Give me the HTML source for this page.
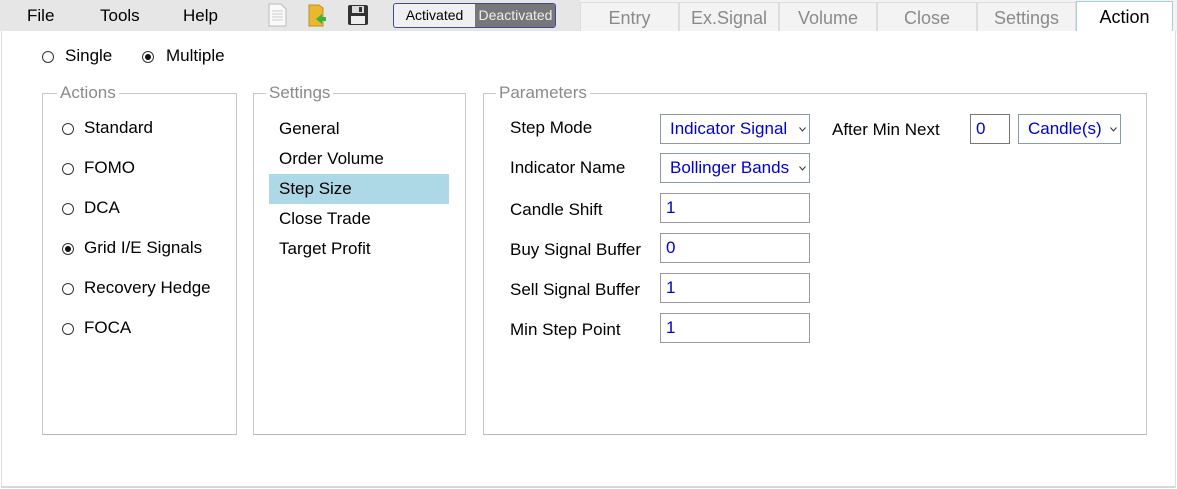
<!DOCTYPE html>
<html><head><style>
*{margin:0;padding:0;box-sizing:border-box}
body{width:1177px;height:489px;position:relative;background:#fff;font-family:"Liberation Sans",sans-serif;font-size:17px;color:#000;overflow:hidden}
.a{position:absolute;white-space:nowrap}
.fs{position:absolute;border:1px solid #c8c8c8;border-bottom-color:#b8b8b8}
.lg{position:absolute;background:#fff;color:#8a8a8a;padding:0 3px;top:-11px;line-height:20px}
.rb{position:absolute;width:12px;height:12px;border:1px solid #333;border-radius:50%}
.rb.on::after{content:"";position:absolute;left:2px;top:2px;width:6px;height:6px;border-radius:50%;background:#111}
.inp{position:absolute;border:1px solid #8a9aa8;height:30px;color:#0000d0;padding-left:9px;line-height:28px;overflow:hidden;white-space:nowrap}
.cb{padding-right:12px}
.cb span.t{display:block;overflow:hidden}
.tb{border-color:#9a9a9a;padding-left:5px}
.arr{position:absolute;right:3px;top:12px}
.tab{position:absolute;top:2px;height:30px;border:1px solid #ddd;border-bottom:none;background:#f3f3f3;color:#8a8a8a;text-align:center;line-height:30px;font-size:18px}
</style></head><body>
<div class="a" style="left:0;top:0;width:1177px;height:31px;background:#e6e6e6"></div>
<div class="a" style="left:27px;top:6px;font-size:17px">File</div>
<div class="a" style="left:100px;top:6px">Tools</div>
<div class="a" style="left:183px;top:6px">Help</div>
<svg class="a" style="left:266px;top:3px" width="22" height="24"><path d="M3 1h12l5 5v17H3z" fill="#fafafa" stroke="#bbb"/><path d="M6 8h11M6 11h11M6 14h11M6 17h11" stroke="#ccc"/></svg>
<svg class="a" style="left:307px;top:3px" width="22" height="24"><path d="M2 2h10l4 3v18H2z" fill="#e8b830" stroke="#c09020"/><path d="M9 16l6-5v3h4v4h-4v3z" fill="#3cb43c"/></svg>
<svg class="a" style="left:347px;top:4px" width="22" height="22"><rect x="1" y="1" width="20" height="20" rx="2" fill="#333"/><rect x="5" y="2" width="12" height="7" fill="#ddd"/><rect x="12" y="3" width="3" height="5" fill="#333"/><rect x="4" y="12" width="14" height="8" fill="#eee"/></svg>
<div class="a" style="left:393px;top:3px;width:163px;height:25px;border:1px solid #3c4c9c;border-radius:3px;overflow:hidden;background:#f0f0f0">
<div class="a" style="left:0;top:0;width:81px;height:23px;line-height:22px;text-align:center;font-size:14px">Activated</div>
<div class="a" style="left:81px;top:0;width:81px;height:23px;line-height:22px;text-align:center;font-size:14px;background:#777;color:#eee">Deactivated</div></div>
<div class="a" style="left:580px;top:0;width:597px;height:33px;background:#f3f3f3"></div>
<div class="tab" style="left:580px;width:99px">Entry</div>
<div class="tab" style="left:679px;width:100px">Ex.Signal</div>
<div class="tab" style="left:779px;width:98px">Volume</div>
<div class="tab" style="left:877px;width:100px">Close</div>
<div class="tab" style="left:977px;width:99px">Settings</div>
<div class="tab" style="left:1076px;top:1px;width:97px;height:32px;background:#fff;color:#000;border-color:#a8cce0">Action</div>
<div class="a" style="left:1px;top:31px;width:1175px;height:457px;border:1px solid #ddd;border-top:none;border-bottom:2px solid #d8d8d8;background:#fff"></div>
<div class="a" style="left:1076px;top:31px;width:97px;height:3px;background:#fff"></div>

<div class="rb" style="left:42px;top:51px"></div><div class="a" style="left:65px;top:46px">Single</div>
<div class="rb on" style="left:142px;top:51px"></div><div class="a" style="left:166px;top:46px">Multiple</div>

<div class="fs" style="left:42px;top:93px;width:195px;height:342px"><div class="lg" style="left:14px">Actions</div></div>
<div class="rb" style="left:62px;top:123px"></div><div class="a" style="left:84px;top:118px">Standard</div>
<div class="rb" style="left:62px;top:163px"></div><div class="a" style="left:84px;top:158px">FOMO</div>
<div class="rb" style="left:62px;top:203px"></div><div class="a" style="left:84px;top:198px">DCA</div>
<div class="rb on" style="left:62px;top:243px"></div><div class="a" style="left:84px;top:238px">Grid I/E Signals</div>
<div class="rb" style="left:62px;top:283px"></div><div class="a" style="left:84px;top:278px">Recovery Hedge</div>
<div class="rb" style="left:62px;top:323px"></div><div class="a" style="left:84px;top:318px">FOCA</div>

<div class="fs" style="left:253px;top:93px;width:213px;height:342px"><div class="lg" style="left:12px">Settings</div></div>
<div class="a" style="left:279px;top:119px">General</div>
<div class="a" style="left:279px;top:149px">Order Volume</div>
<div class="a" style="left:269px;top:174px;width:180px;height:30px;background:#add8e6"></div>
<div class="a" style="left:279px;top:179px">Step Size</div>
<div class="a" style="left:279px;top:209px">Close Trade</div>
<div class="a" style="left:279px;top:239px">Target Profit</div>

<div class="fs" style="left:483px;top:93px;width:664px;height:342px"><div class="lg" style="left:12px">Parameters</div></div>
<div class="a" style="left:510px;top:118px">Step Mode</div>
<div class="a" style="left:510px;top:158px">Indicator Name</div>
<div class="a" style="left:510px;top:200px">Candle Shift</div>
<div class="a" style="left:510px;top:240px">Buy Signal Buffer</div>
<div class="a" style="left:510px;top:280px">Sell Signal Buffer</div>
<div class="a" style="left:510px;top:320px">Min Step Point</div>
<div class="inp cb" style="left:660px;top:114px;width:150px"><span class="t">Indicator Signal</span><svg class="arr" width="7" height="5"><path d="M0.5 0.5L3.5 4L6.5 0.5" fill="none" stroke="#333"/></svg></div>
<div class="inp cb" style="left:660px;top:153px;width:150px"><span class="t">Bollinger Bands</span><svg class="arr" width="7" height="5"><path d="M0.5 0.5L3.5 4L6.5 0.5" fill="none" stroke="#333"/></svg></div>
<div class="inp tb" style="left:660px;top:193px;width:150px">1</div>
<div class="inp tb" style="left:660px;top:233px;width:150px">0</div>
<div class="inp tb" style="left:660px;top:273px;width:150px">1</div>
<div class="inp tb" style="left:660px;top:313px;width:150px">1</div>
<div class="a" style="left:832px;top:120px">After Min Next</div>
<div class="inp tb" style="left:970px;top:114px;width:40px;border-color:#777">0</div>
<div class="inp cb" style="left:1018px;top:114px;width:103px"><span class="t">Candle(s)</span><svg class="arr" width="7" height="5"><path d="M0.5 0.5L3.5 4L6.5 0.5" fill="none" stroke="#333"/></svg></div>
</body></html>
